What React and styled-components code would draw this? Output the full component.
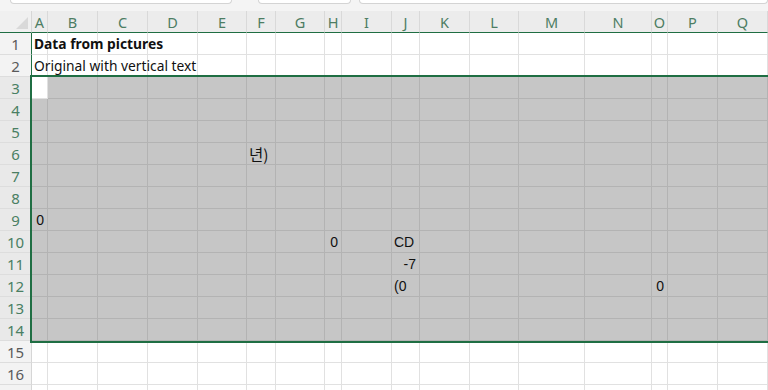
import React from "react";
import styled, { createGlobalStyle } from "styled-components";

const GlobalStyle = createGlobalStyle`
  html, body {
    margin: 0;
    padding: 0;
    background: #ffffff;
    overflow: hidden;
  }
  body {
    font-family: "Noto Sans", "Liberation Sans", sans-serif;
  }
`;

const COLUMNS = [
  ["A", 16], ["B", 50], ["C", 50], ["D", 50], ["E", 49], ["F", 29],
  ["G", 49], ["H", 17], ["I", 50], ["J", 28], ["K", 50], ["L", 49],
  ["M", 66], ["N", 67], ["O", 16], ["P", 50], ["Q", 0],
];

const ROW_COUNT = 17;
const LABELLED_ROWS = 16;
const SELECTED_FROM = 3;
const SELECTED_TO = 14;

// cell contents, keyed by address
const CELLS = {
  A1: { text: "Data from pictures", bold: true },
  A2: { text: "Original with vertical text" },
  F6: { text: "년)", kr: true },
  A9: { text: "0", num: true },
  H10: { text: "0", num: true },
  J10: { text: "CD", data: true },
  J11: { text: "-7", num: true },
  J12: { text: "(0", data: true },
  O12: { text: "0", num: true },
};

const template = `32px ${COLUMNS.map(([, w]) => (w ? `${w}px` : "1fr")).join(" ")}`;

const App = () => {
  const rows = Array.from({ length: ROW_COUNT }, (_, i) => i + 1);
  return (
    <>
      <GlobalStyle />
      <Page>
        <TopStrip>
          <FieldBox $left={10} $width={227} />
          <FieldBox $left={26} $width={94} />
          <FieldBox $left={8} $width={420} />
        </TopStrip>
        <Sheet $template={template}>
          <Corner>
            <svg width="12" height="12" viewBox="0 0 12 12">
              <polygon points="12,0 12,12 0,12" fill="#d9d9d9" />
            </svg>
          </Corner>
          {COLUMNS.map(([name]) => (
            <ColHeader key={name}>{name}</ColHeader>
          ))}
          {rows.map((r) => {
            const selected = r >= SELECTED_FROM && r <= SELECTED_TO;
            return (
              <React.Fragment key={r}>
                <RowHeader $selected={selected} $edge={r <= SELECTED_TO}>
                  {r <= LABELLED_ROWS ? r : ""}
                </RowHeader>
                {COLUMNS.map(([name]) => {
                  const cell = CELLS[`${name}${r}`];
                  const active = name === "A" && r === SELECTED_FROM;
                  return (
                    <Cell key={name} $selected={selected && !active}>
                      {cell && (
                        <CellText
                          $bold={cell.bold}
                          $num={cell.num}
                          $data={cell.data || cell.num}
                          $kr={cell.kr}
                        >
                          {cell.text}
                        </CellText>
                      )}
                    </Cell>
                  );
                })}
              </React.Fragment>
            );
          })}
          <SelectionFrame />
        </Sheet>
      </Page>
    </>
  );
};

const Page = styled.div`
  width: 768px;
  height: 390px;
  overflow: hidden;
  background: #ffffff;
`;

const TopStrip = styled.div`
  height: 11px;
  display: flex;
  align-items: flex-start;
  background: #f4f4f4;
`;

const FieldBox = styled.div`
  margin-left: ${(p) => p.$left}px;
  width: ${(p) => p.$width}px;
  height: 3px;
  background: #ffffff;
  border: 1px solid #d4d4d4;
  border-top: none;
  border-radius: 0 0 5px 5px;
`;

const Sheet = styled.div`
  position: relative;
  display: grid;
  grid-template-columns: ${(p) => p.$template};
  grid-auto-rows: 22px;
`;

const Corner = styled.div`
  box-sizing: border-box;
  background: #f0f0f0;
  border-right: 1px solid #d6d6d6;
  border-bottom: 1px solid #1f6e43;
  display: flex;
  align-items: flex-end;
  justify-content: flex-end;
  padding: 0 3px 3px 0;
`;

const ColHeader = styled.div`
  box-sizing: border-box;
  background: #ececec;
  border-right: 1px solid #d9d9d9;
  border-bottom: 1px solid #1f6e43;
  color: #4d7d63;
  font-size: 14.5px;
  display: flex;
  align-items: center;
  justify-content: center;
  overflow: hidden;
`;

const RowHeader = styled.div`
  box-sizing: border-box;
  background: ${(p) => (p.$selected ? "#e9e9e9" : "#f3f3f3")};
  border-right: 1px solid ${(p) => (p.$edge ? "#1f6e43" : "#d6d6d6")};
  border-bottom: 1px solid #dddddd;
  color: ${(p) => (p.$selected ? "#4a7f63" : "#5a5a5a")};
  font-size: 15px;
  display: flex;
  align-items: center;
  justify-content: center;
`;

const Cell = styled.div`
  box-sizing: border-box;
  position: relative;
  background: ${(p) => (p.$selected ? "#c6c6c6" : "#ffffff")};
  border-right: 1px solid ${(p) => (p.$selected ? "#b3b3b3" : "#e1e1e1")};
  border-bottom: 1px solid ${(p) => (p.$selected ? "#b3b3b3" : "#e1e1e1")};
`;

const CellText = styled.span`
  position: absolute;
  top: 0;
  bottom: 0;
  display: flex;
  align-items: center;
  white-space: nowrap;
  z-index: 1;
  color: #111111;
  ${(p) => (p.$num ? "right: 3px;" : "left: 2px;")}
  font-weight: ${(p) => (p.$bold ? 700 : 400)};
  font-size: ${(p) => (p.$kr ? "15.5px" : p.$data ? "14px" : "13.8px")};
  font-family: ${(p) =>
    p.$kr
      ? '"Noto Sans CJK KR", "Noto Sans", sans-serif'
      : p.$data
      ? '"Liberation Sans", Arial, sans-serif'
      : '"Noto Sans", "Liberation Sans", sans-serif'};
`;

const SelectionFrame = styled.div`
  position: absolute;
  left: 30px;
  top: 64px;
  right: -4px;
  height: 268px;
  box-sizing: border-box;
  border: 2px solid #1f6e43;
  border-right: none;
  pointer-events: none;
  z-index: 2;
`;

export default App;
